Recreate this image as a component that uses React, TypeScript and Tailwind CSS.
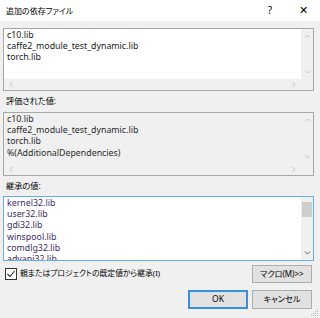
import React from "react";

type Dir = "up" | "down" | "left" | "right";

function Chev({ dir, color }: { dir: Dir; color: string }) {
  const pts = {
    up: "1,4.5 3.5,2 6,4.5",
    down: "1,2.5 3.5,5 6,2.5",
    left: "4.5,1 2,3.5 4.5,6",
    right: "2.5,1 5,3.5 2.5,6",
  }[dir];
  return (
    <svg width="7" height="7" viewBox="0 0 7 7" className="block">
      <polyline points={pts} fill="none" stroke={color} strokeWidth="1" />
    </svg>
  );
}

function ListBox({
  lines,
  kind,
  hscroll,
  textColor,
  heightClass,
}: {
  lines: string[];
  kind: "edit" | "readonly" | "focus";
  hscroll: boolean;
  textColor: string;
  heightClass: string;
}) {
  const frame =
    kind === "focus"
      ? "border-[#6aaee8] bg-white"
      : kind === "readonly"
        ? "border-[#a7a7a7] bg-[#f0f0f0]"
        : "border-[#a7a7a7] bg-white";
  const arrow = kind === "focus" ? "#606060" : "#c2c2c2";
  return (
    <div className={`flex w-[311px] flex-col overflow-hidden border ${frame} ${heightClass}`}>
      <div className="flex min-h-0 flex-1">
        <div className={`flex-1 overflow-hidden pl-[3px] pt-[1px] text-[8.8px] leading-[11.2px] ${textColor}`}>
          {lines.map((l) => (
            <div key={l} className="whitespace-nowrap">
              {l}
            </div>
          ))}
        </div>
        <div className="flex w-[12px] flex-col items-center justify-between bg-[#f0f0f0] py-[4px]">
          <Chev dir="up" color={arrow} />
          {kind === "focus" && <div className="mt-[-6px] h-[15px] w-[10px] bg-[#cdcdcd]" />}
          {kind === "focus" && <div className="flex-1" />}
          <Chev dir="down" color={arrow} />
        </div>
      </div>
      {hscroll && (
        <div className="flex h-[11px]">
          <div className="flex flex-1 items-center justify-between bg-[#f0f0f0] px-[4px]">
            <Chev dir="left" color={arrow} />
            <Chev dir="right" color={arrow} />
          </div>
          <div className="w-[12px] bg-[#f0f0f0]" />
        </div>
      )}
    </div>
  );
}

export default function App() {
  return (
    <div className="relative flex h-[318px] w-[320px] flex-col bg-[#f0f0f0] text-black [font-family:'Noto_Sans','Noto_Sans_CJK_JP',sans-serif] [font-feature-settings:'palt']">
      <div className="flex h-[21px] items-center bg-white pl-[6px] text-[8px]">
        <span>追加の依存ファイル</span>
        <span className="ml-auto w-[10px] text-center text-[10px]">?</span>
        <span className="ml-[23px] mr-[12px] w-[10px] text-center text-[11px] font-light">✕</span>
      </div>

      <div className="flex flex-col pl-[3px] pt-[7px]">
        <ListBox
          lines={["c10.lib", "caffe2_module_test_dynamic.lib", "torch.lib"]}
          kind="edit"
          hscroll
          textColor="text-[#1a1a1a]"
          heightClass="h-[63px]"
        />
        <div className="flex h-[21px] items-center pl-[3px] text-[8.2px]">評価された値:</div>
        <ListBox
          lines={["c10.lib", "caffe2_module_test_dynamic.lib", "torch.lib", "%(AdditionalDependencies)"]}
          kind="readonly"
          hscroll
          textColor="text-[#2a2a2a]"
          heightClass="h-[64px]"
        />
        <div className="flex h-[20px] items-center pl-[3px] text-[8.2px]">継承の値:</div>
        <ListBox
          lines={["kernel32.lib", "user32.lib", "gdi32.lib", "winspool.lib", "comdlg32.lib", "advapi32.lib"]}
          kind="focus"
          hscroll={false}
          textColor="text-[#3b2b63]"
          heightClass="h-[65px]"
        />
      </div>

      <div className="mt-[4px] flex h-[18px] items-center pl-[5px] pr-[8px]">
        <div className="flex h-[12px] w-[12px] items-center justify-center border border-[#333333] bg-white">
          <svg width="10" height="10" viewBox="0 0 10 10">
            <polyline points="1.5,5 4,7.5 8.5,2" fill="none" stroke="#222" strokeWidth="1.1" />
          </svg>
        </div>
        <span className="ml-[3px] text-[7.8px]">親またはプロジェクトの既定値から継承(I)</span>
        <button className="ml-auto h-[18px] w-[60px] border border-[#adadad] bg-[#e1e1e1] text-[8px]">
          マクロ(M)&gt;&gt;
        </button>
      </div>

      <div className="mt-[7px] flex justify-end gap-[4px] pr-[8px]">
        <button className="h-[19px] w-[60px] border-2 border-[#3a8ee0] bg-[#e1e1e1] text-[8.5px]">OK</button>
        <button className="h-[19px] w-[60px] border border-[#adadad] bg-[#e1e1e1] text-[8.2px]">キャンセル</button>
      </div>

      <svg width="8" height="8" viewBox="0 0 8 8" className="absolute bottom-[1px] right-[1px]">
        <rect x="6" y="0" width="1" height="1" fill="#b8b8b8" />
        <rect x="4" y="2" width="1" height="1" fill="#b8b8b8" />
        <rect x="6" y="2" width="1" height="1" fill="#b8b8b8" />
        <rect x="2" y="4" width="1" height="1" fill="#b8b8b8" />
        <rect x="4" y="4" width="1" height="1" fill="#b8b8b8" />
        <rect x="6" y="4" width="1" height="1" fill="#b8b8b8" />
        <rect x="0" y="6" width="1" height="1" fill="#b8b8b8" />
        <rect x="2" y="6" width="1" height="1" fill="#b8b8b8" />
        <rect x="4" y="6" width="1" height="1" fill="#b8b8b8" />
        <rect x="6" y="6" width="1" height="1" fill="#b8b8b8" />
      </svg>
    </div>
  );
}
